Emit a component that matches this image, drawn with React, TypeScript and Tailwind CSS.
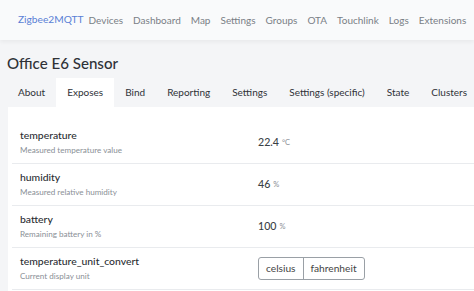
import React from 'react';

const navItems = ['Devices', 'Dashboard', 'Map', 'Settings', 'Groups', 'OTA', 'Touchlink', 'Logs', 'Extensions'];
const tabs = ['About', 'Exposes', 'Bind', 'Reporting', 'Settings', 'Settings (specific)', 'State', 'Clusters'];

interface Expose {
  name: string;
  description: string;
  value?: string;
  unit?: string;
  options?: string[];
}

const exposes: Expose[] = [
  { name: 'temperature', description: 'Measured temperature value', value: '22.4', unit: '°C' },
  { name: 'humidity', description: 'Measured relative humidity', value: '46', unit: '%' },
  { name: 'battery', description: 'Remaining battery in %', value: '100', unit: '%' },
  { name: 'temperature_unit_convert', description: 'Current display unit', options: ['celsius', 'fahrenheit'] },
];

const ExposeRow: React.FC<{ item: Expose }> = ({ item }) => (
  <div className="flex items-center h-[42px] border-b border-[#e9ebee]">
    <div className="w-[246px] pl-2 flex flex-col">
      <span className="text-[10.4px] leading-[15px] font-medium text-[#2b2e33]">{item.name}</span>
      <span className="text-[8.1px] leading-[14px] text-[#8a8f96]">{item.description}</span>
    </div>
    <div className="flex items-center">
      {item.options ? (
        <div className="flex h-[23px] border border-[#9aa0a6] rounded-[3px] text-[10.2px] text-[#444]">
          {item.options.map((o, i) => (
            <span key={o} className={`px-[7px] flex items-center ${i > 0 ? 'border-l border-[#9aa0a6]' : ''}`}>
              {o}
            </span>
          ))}
        </div>
      ) : (
        <>
          <span className="text-[10.6px] font-medium text-[#3a3f45]">{item.value}</span>
          <span className="text-[7.5px] text-[#8a8f96] ml-[3px]">{item.unit}</span>
        </>
      )}
    </div>
  </div>
);

export default function App() {
  return (
    <div className="w-[474px] h-[291px] overflow-hidden bg-[#f4f5f7] font-['Lato','Noto_Sans',sans-serif]">
      <nav className="h-10 bg-[#f9fafb] shadow-[0_2px_4px_rgba(0,0,0,0.05)] flex items-center pl-[18px] text-[10px] whitespace-nowrap">
        <span className="text-[10.2px] text-[#5a7fd6] mr-[5px]">Zigbee2MQTT</span>
        <div className="flex gap-[10px]">
          {navItems.map((n) => (
            <span key={n} className="text-[#7a7f86]">{n}</span>
          ))}
        </div>
      </nav>
      <h1 className="pl-[7px] mt-[12px] text-[15.1px] leading-[22px] font-medium text-[#2f3237]">Office E6 Sensor</h1>
      <div className="flex pl-[7px] mt-[4px] h-[29px] text-[10px] text-[#2f3237] whitespace-nowrap">
        {tabs.map((t) => (
          <span
            key={t}
            className={`px-[11px] flex items-center ${t === 'Exposes' ? 'bg-white' : ''}`}
          >
            {t}
          </span>
        ))}
      </div>
      <div className="ml-2 bg-white pt-[15px] pl-1 h-full">
        {exposes.map((e) => (
          <ExposeRow key={e.name} item={e} />
        ))}
      </div>
    </div>
  );
}
